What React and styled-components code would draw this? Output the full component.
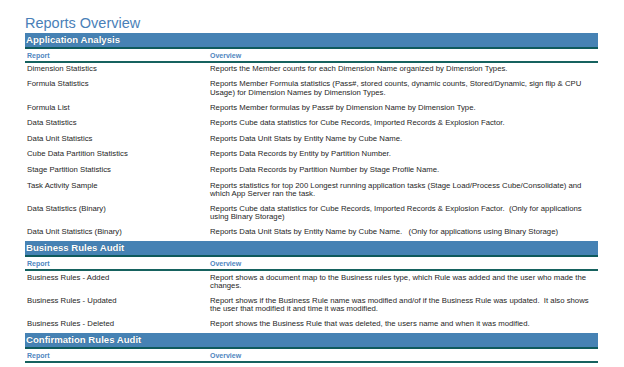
import React from 'react'
import styled, { createGlobalStyle } from 'styled-components';

const GlobalStyle = createGlobalStyle`
    body{
        margin:0;
        background:#fff;
        font-family:"Liberation Sans", Arial, sans-serif;
    }
`;

const sections=[
    {
        title:"Application Analysis",
        rows:[
            ["Dimension Statistics","Reports the Member counts for each Dimension Name organized by Dimension Types."],
            ["Formula Statistics","Reports Member Formula statistics (Pass#, stored counts, dynamic counts, Stored/Dynamic, sign flip & CPU Usage) for Dimension Names by Dimension Types."],
            ["Formula List","Reports Member formulas by Pass# by Dimension Name by Dimension Type."],
            ["Data Statistics","Reports Cube data statistics for Cube Records, Imported Records & Explosion Factor."],
            ["Data Unit Statistics","Reports Data Unit Stats by Entity Name by Cube Name."],
            ["Cube Data Partition Statistics","Reports Data Records by Entity by Partition Number."],
            ["Stage Partition Statistics","Reports Data Records by Partition Number by Stage Profile Name."],
            ["Task Activity Sample","Reports statistics for top 200 Longest running application tasks (Stage Load/Process Cube/Consolidate) and which App Server ran the task."],
            ["Data Statistics (Binary)","Reports Cube data statistics for Cube Records, Imported Records & Explosion Factor.  (Only for applications using Binary Storage)"],
            ["Data Unit Statistics (Binary)","Reports Data Unit Stats by Entity Name by Cube Name.   (Only for applications using Binary Storage)"]
        ]
    },
    {
        title:"Business Rules Audit",
        rows:[
            ["Business Rules - Added","Report shows a document map to the Business rules type, which Rule was added and the user who made the changes."],
            ["Business Rules - Updated","Report shows if the Business Rule name was modified and/of if the Business Rule was updated.  It also shows the user that modified it and time it was modified."],
            ["Business Rules - Deleted","Report shows the Business Rule that was deleted, the users name and when it was modified."]
        ]
    },
    {
        title:"Confirmation Rules Audit",
        rows:[]
    }
]

const Page = styled.div`
    width:573px;
    padding:14px 0 0 25px;
`;

const Title = styled.h1`
    margin:0;
    font-size:14.5px;
    font-weight:normal;
    line-height:18.5px;
    color:#4a7fb8;
`;

const SectionBar = styled.div`
    background:#4682b4;
    border-bottom:2px solid #0e5a5c;
    color:#fff;
    font-weight:bold;
    font-size:9.6px;
    line-height:14px;
    height:14px;
    padding:0 1px;
    text-shadow:0 0 1px rgba(0,0,0,.3);
`;

const HeadRow = styled.div`
    display:grid;
    grid-template-columns:183px 1fr;
    height:14px;
    box-sizing:border-box;
    padding:3px 2px 3px;
    border-bottom:2px solid #16625f;
    font-size:7px;
    line-height:8px;
    color:#4f86c0;
    font-weight:bold;
`;

const Row = styled.div`
    display:grid;
    grid-template-columns:183px 1fr;
    box-sizing:border-box;
    min-height:15.6px;
    padding:2.3px 6px 3.5px 2px;
    font-size:7.75px;
    line-height:8.7px;
    color:#262626;
`;

const Cell = styled.div`
    white-space:pre-wrap;
`;

const App = () => {
  return (
    <>
      <GlobalStyle/>
      <Page>
        <Title>Reports Overview</Title>
        {sections.map((section)=>{
            return (
                <div key={section.title}>
                    <SectionBar>{section.title}</SectionBar>
                    <HeadRow>
                        <Cell>Report</Cell>
                        <Cell>Overview</Cell>
                    </HeadRow>
                    {section.rows.map((row)=>{
                        return (
                            <Row key={row[0]}>
                                <Cell>{row[0]}</Cell>
                                <Cell>{row[1]}</Cell>
                            </Row>
                        )
                    })}
                </div>
            )
        })}
      </Page>
    </>
  )
}

export default App;
